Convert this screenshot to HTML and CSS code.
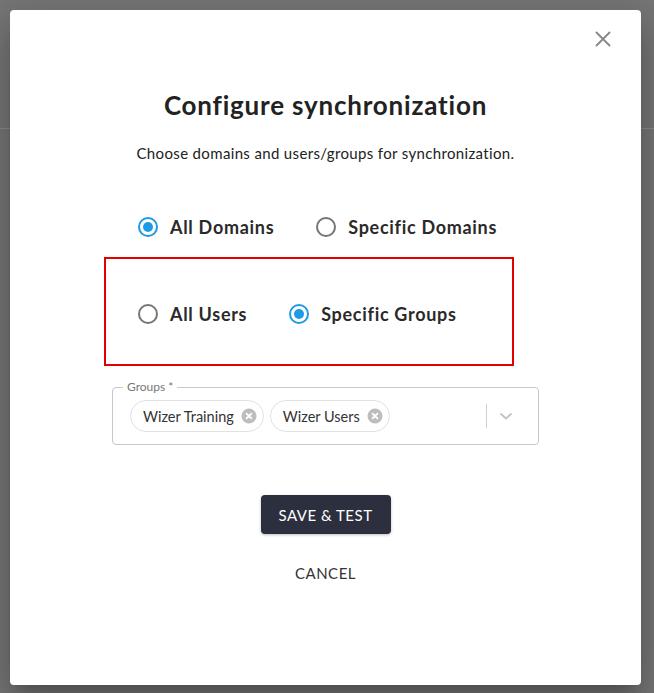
FILE: index.html
```html
<!DOCTYPE html>
<html lang="en">
<head>
<meta charset="utf-8">
<title>Configure synchronization</title>
<link rel="stylesheet" href="styles.css">
</head>
<body>
<div class="page">
  <div class="page-header"></div>
</div>
<div class="backdrop">
  <div class="modal">
    <button class="close" aria-label="Close">
      <svg width="24" height="24" viewBox="0 0 24 24"><path d="M5.5 5.5 L18.5 18.5 M18.5 5.5 L5.5 18.5" stroke="#888" stroke-width="1.9" fill="none" stroke-linecap="round"/></svg>
    </button>
    <h1 class="title">Configure synchronization</h1>
    <p class="subtitle">Choose domains and users/groups for synchronization.</p>
    <div class="form">
      <div class="radio-row first">
        <label class="radio"><span class="circle checked"></span><span class="rlabel">All Domains</span></label>
        <label class="radio"><span class="circle"></span><span class="rlabel">Specific Domains</span></label>
      </div>
      <div class="highlight">
        <div class="radio-row">
          <label class="radio"><span class="circle"></span><span class="rlabel">All Users</span></label>
          <label class="radio"><span class="circle checked"></span><span class="rlabel">Specific Groups</span></label>
        </div>
      </div>
      <div class="field">
        <span class="field-label">Groups *</span>
        <div class="chips">
          <span class="chip">Wizer Training<span class="chip-x"><svg width="16" height="16" viewBox="0 0 16 16"><circle cx="8" cy="8" r="7.5" fill="#bdbdbd"/><path d="M5.6 5.6 L10.4 10.4 M10.4 5.6 L5.6 10.4" stroke="#fff" stroke-width="1.8" stroke-linecap="round"/></svg></span></span>
          <span class="chip">Wizer Users<span class="chip-x"><svg width="16" height="16" viewBox="0 0 16 16"><circle cx="8" cy="8" r="7.5" fill="#bdbdbd"/><path d="M5.6 5.6 L10.4 10.4 M10.4 5.6 L5.6 10.4" stroke="#fff" stroke-width="1.8" stroke-linecap="round"/></svg></span></span>
        </div>
        <span class="sep"></span>
        <span class="chevron"><svg width="20" height="20" viewBox="0 0 20 20"><path d="M5 8 L10 12.5 L15 8" stroke="#c2c2c2" stroke-width="1.8" fill="none" stroke-linecap="round" stroke-linejoin="round"/></svg></span>
      </div>
    </div>
    <div class="actions">
      <button class="btn-primary">SAVE &amp; TEST</button>
      <button class="btn-text">CANCEL</button>
    </div>
  </div>
</div>
</body>
</html>
```
FILE: styles.css
```css
html, body {
  margin: 0;
  padding: 0;
  height: 100%;
}
body {
  background: #767676;
  font-family: "Lato", "Open Sans", sans-serif;
  overflow: hidden;
}
.page {
  height: 100%;
}
.page-header {
  height: 128px;
  border-bottom: 1px solid #8c8c8c;
}
.backdrop {
  position: absolute;
  inset: 0;
}
.modal {
  position: absolute;
  left: 10px;
  top: 10px;
  width: 631px;
  height: 675px;
  box-sizing: border-box;
  background: #fff;
  border-radius: 4px;
  box-shadow: 0 11px 15px -7px rgba(0,0,0,.2), 0 24px 38px 3px rgba(0,0,0,.14), 0 9px 46px 8px rgba(0,0,0,.12);
  padding-top: 80px;
}
.close {
  position: absolute;
  right: 26px;
  top: 17px;
  width: 24px;
  height: 24px;
  padding: 0;
  border: 0;
  background: none;
}
.title {
  margin: 0;
  font-size: 26px;
  line-height: 30px;
  font-weight: 700;
  color: #222;
  text-align: center;
  letter-spacing: 0.8px;
}
.subtitle {
  margin: 23px 0 0;
  font-size: 15px;
  line-height: 20px;
  color: #222;
  text-align: center;
  letter-spacing: 0.35px;
}
.form {
  width: 427px;
  margin: 52px 0 0 102px;
}
.radio-row {
  display: flex;
  align-items: center;
  gap: 42px;
  height: 24px;
  padding-left: 26px;
}
.radio {
  display: flex;
  align-items: center;
  gap: 12px;
}
.circle {
  width: 20px;
  height: 20px;
  box-sizing: border-box;
  border: 2px solid #757575;
  border-radius: 50%;
  display: flex;
  align-items: center;
  justify-content: center;
}
.circle.checked {
  border-color: #1e9be6;
}
.circle.checked::after {
  content: "";
  width: 10px;
  height: 10px;
  border-radius: 50%;
  background: #1e9be6;
}
.rlabel {
  font-size: 18px;
  font-weight: 700;
  color: #2a2a2a;
  letter-spacing: 0.7px;
}
.highlight {
  margin: 18px 0 0 -8px;
  width: 410px;
  height: 109px;
  box-sizing: border-box;
  border: 2px solid #e50000;
  padding-top: 43px;
  padding-left: 6px;
}
.field {
  position: relative;
  margin-top: 21px;
  height: 58px;
  box-sizing: border-box;
  border: 1px solid #c8c8c8;
  border-radius: 4px;
  display: flex;
  align-items: center;
  padding: 0 22px 0 17px;
}
.field-label {
  position: absolute;
  left: 10px;
  top: -8px;
  padding: 0 4px;
  background: #fff;
  font-size: 12px;
  line-height: 14px;
  color: #777;
}
.chips {
  flex: 1;
  display: flex;
  gap: 6px;
}
.chip {
  display: flex;
  align-items: center;
  gap: 7px;
  height: 32px;
  box-sizing: border-box;
  border: 1px solid #e2e2e2;
  border-radius: 16px;
  padding: 0 6px 0 12px;
  font-size: 14.5px;
  color: #333;
}
.chip-x {
  display: flex;
}
.sep {
  width: 1px;
  height: 24px;
  background: #d0d0d0;
}
.chevron {
  display: flex;
  margin-left: 9px;
}
.actions {
  display: flex;
  flex-direction: column;
  align-items: center;
  margin-top: 50px;
}
.btn-primary {
  width: 130px;
  height: 39px;
  border: 0;
  border-radius: 4px;
  background: #2c303e;
  color: #fff;
  font-family: inherit;
  font-size: 15px;
  letter-spacing: 0.5px;
  box-shadow: 0 1px 3px rgba(0,0,0,.25);
}
.btn-text {
  margin-top: 29px;
  border: 0;
  background: none;
  padding: 0;
  font-family: inherit;
  font-size: 15px;
  line-height: 20px;
  letter-spacing: 0.5px;
  color: #333;
}
```
